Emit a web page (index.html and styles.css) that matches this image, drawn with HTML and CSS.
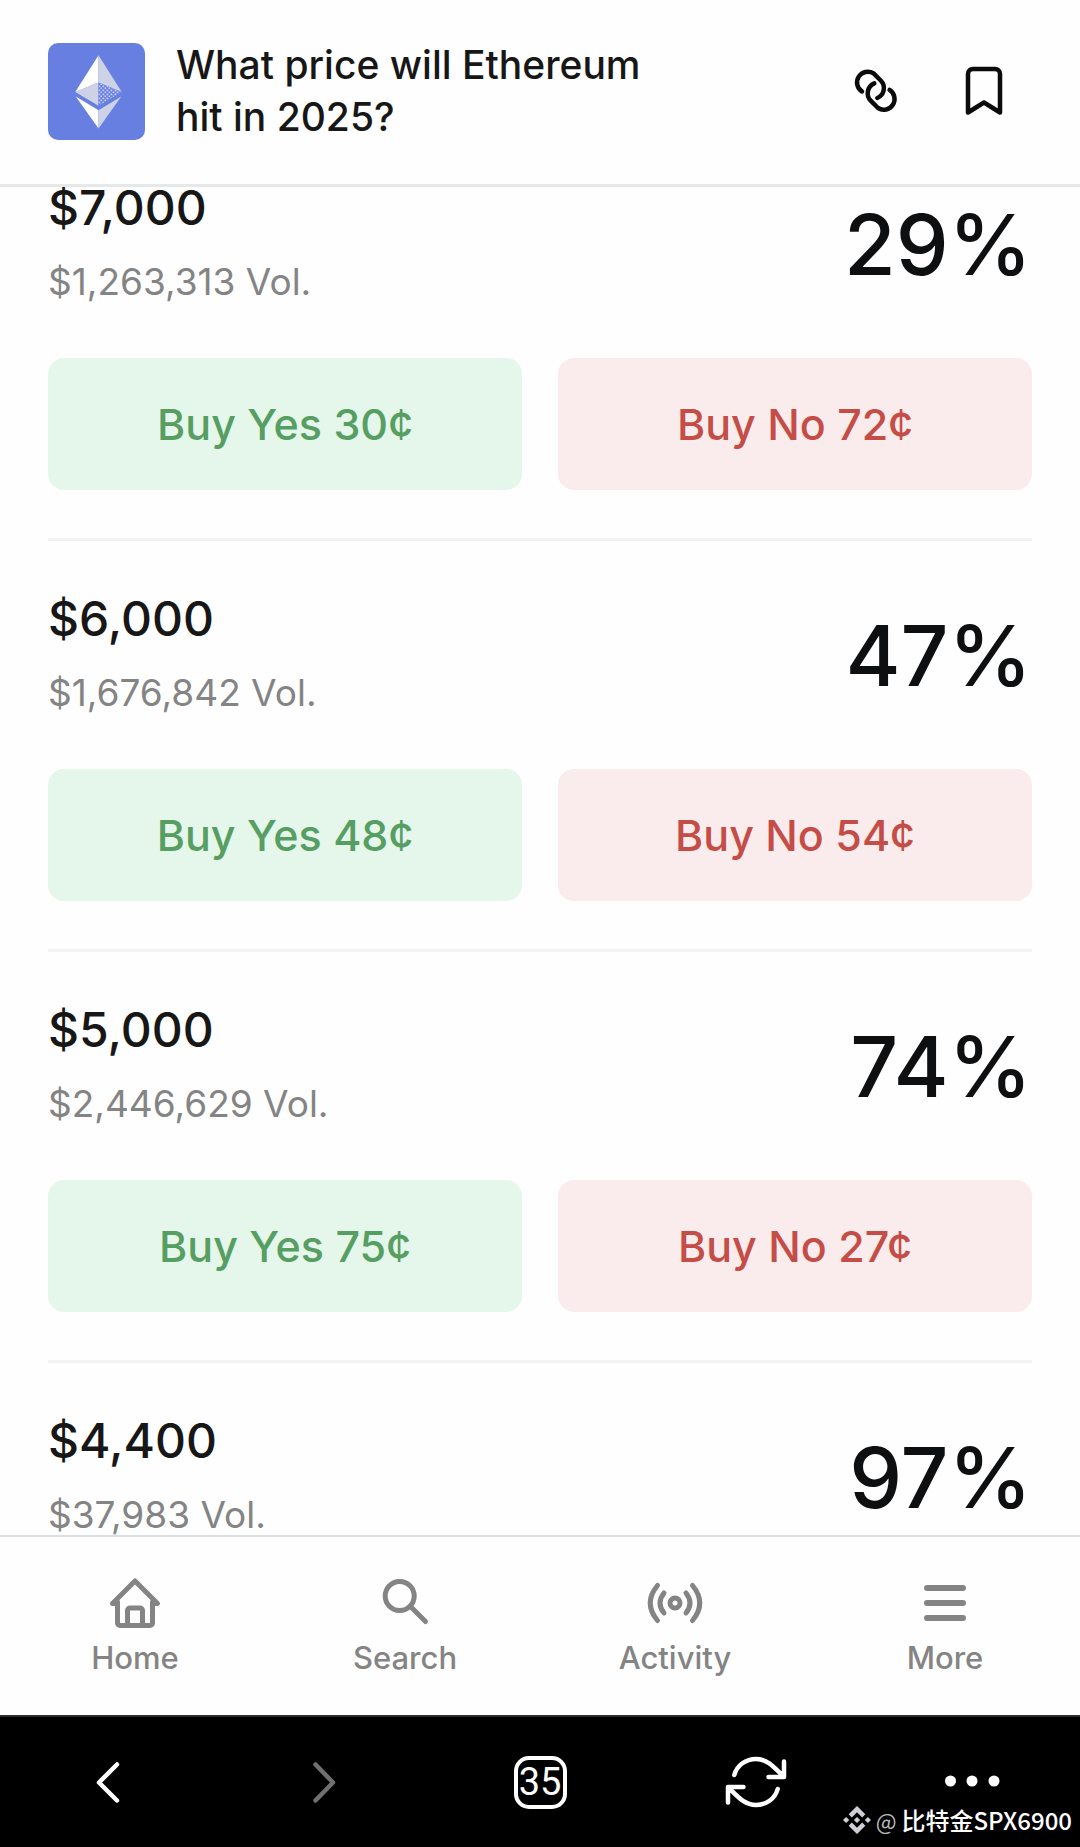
FILE: index.html
```html
<!DOCTYPE html>
<html lang="en">
<head>
<meta charset="utf-8">
<meta name="viewport" content="width=device-width, initial-scale=1">
<title>What price will Ethereum hit in 2025?</title>
<link rel="stylesheet" href="styles.css">
</head>
<body>
<header class="header">
  <svg class="coin" viewBox="0 0 96 96" aria-hidden="true">
    <defs>
      <pattern id="dots" width="4" height="4" patternUnits="userSpaceOnUse">
        <rect width="4" height="4" fill="#687fe2"/>
        <rect width="1.5" height="1.5" fill="#dfe3f6"/>
        <rect x="2" y="2" width="1.5" height="1.5" fill="#dfe3f6"/>
      </pattern>
    </defs>
    <rect width="96" height="96" rx="10" fill="#687fe2"/>
    <path d="M50 12 27 48.500 50 39Z" fill="#fff"/>
    <path d="M50 12 73 48.500 50 39Z" fill="#cdd2e7"/>
    <path d="M50 39 27 48.500 50 62Z" fill="#cdd2e7"/>
    <path d="M50 39 73 48.500 50 62Z" fill="url(#dots)"/>
    <path d="M27.500 53 50 66.500V84.500Z" fill="#fff"/>
    <path d="M72.500 53 50 66.500V84.500Z" fill="#cdd2e7"/>
  </svg>
  <h1 class="title">What price will Ethereum hit in 2025?</h1>
  <div class="actions">
    <button class="icon-button" type="button" aria-label="Copy link">
      <svg class="action-icon" viewBox="0 0 48 48"><path d="M10 24.500A10.700 10.700 0 1 1 21.600 6.400L28.700 13.500A10.700 10.700 0 0 1 25.300 31M37.600 22.900A10.700 10.700 0 1 1 26 41L18.900 33.900A10.700 10.700 0 0 1 22.300 16.400"/></svg>
    </button>
    <button class="icon-button" type="button" aria-label="Bookmark">
      <svg class="action-icon" viewBox="0 0 48 48"><path d="M8 45.500V7a5 5 0 0 1 5-5h22a5 5 0 0 1 5 5v38.500L24 35.500Z"/></svg>
    </button>
  </div>
</header>

<main class="content">
  <ul class="markets">
    <li class="market">
      <div class="summary">
        <div><h2 class="name">$7,000</h2><p class="volume">$1,263,313 Vol.</p></div>
        <span class="chance">29%</span>
      </div>
      <div class="trade"><button class="buy yes" type="button">Buy Yes 30¢</button><button class="buy no" type="button">Buy No 72¢</button></div>
    </li>
    <li class="market">
      <div class="summary">
        <div><h2 class="name">$6,000</h2><p class="volume">$1,676,842 Vol.</p></div>
        <span class="chance">47%</span>
      </div>
      <div class="trade"><button class="buy yes" type="button">Buy Yes 48¢</button><button class="buy no" type="button">Buy No 54¢</button></div>
    </li>
    <li class="market">
      <div class="summary">
        <div><h2 class="name">$5,000</h2><p class="volume">$2,446,629 Vol.</p></div>
        <span class="chance">74%</span>
      </div>
      <div class="trade"><button class="buy yes" type="button">Buy Yes 75¢</button><button class="buy no" type="button">Buy No 27¢</button></div>
    </li>
    <li class="market">
      <div class="summary">
        <div><h2 class="name">$4,400</h2><p class="volume">$37,983 Vol.</p></div>
        <span class="chance">97%</span>
      </div>
    </li>
  </ul>
</main>

<nav class="tabs">
  <a class="tab" href="#home">
    <svg class="tab-icon" viewBox="0 0 60 60"><path d="M12.500 30.500H7.500L30 8 52.500 30.500H47.500M12.500 29V50a2.500 2.500 0 0 0 2.500 2.500H45a2.500 2.500 0 0 0 2.500-2.500V29M22.500 52V37.500a2.500 2.500 0 0 1 2.500-2.500H35a2.500 2.500 0 0 1 2.500 2.500V52"/></svg>
    Home
  </a>
  <a class="tab" href="#search">
    <svg class="tab-icon" viewBox="0 0 60 60"><circle cx="24.700" cy="23" r="14.500"/><path d="M35.500 33.500 50.500 48.500"/></svg>
    Search
  </a>
  <a class="tab" href="#activity">
    <svg class="tab-icon" viewBox="0 0 60 60"><circle cx="30" cy="30" r="5"/><path d="M19 20Q11 30 19 40M41 20Q49 30 41 40M12.500 12.500Q-2 30 12.500 47.500M47.500 12.500Q62 30 47.500 47.500"/></svg>
    Activity
  </a>
  <a class="tab" href="#more">
    <svg class="tab-icon menu" viewBox="0 0 60 60"><path d="M12 15H48M12 30H48M12 45H48"/></svg>
    More
  </a>
</nav>

<footer class="browser">
  <button class="control" type="button" aria-label="Back"><svg class="control-icon" viewBox="0 0 60 60"><path d="M39 12.500 21 30.500 39 48.500"/></svg></button>
  <button class="control" type="button" aria-label="Forward" disabled><svg class="control-icon" viewBox="0 0 60 60"><path d="M21.500 12.500 39 30.500 21.500 48.500"/></svg></button>
  <button class="control" type="button" aria-label="35 open pages"><span class="count">35</span></button>
  <button class="control" type="button" aria-label="Reload"><svg class="control-icon" viewBox="0 0 60 60"><path d="M8.300 23C11 13 20 7 30 7C41 7 47 14 57 24M58 9.500V25H42.500M51.700 37C49 47 40 53 30 53C19 53 13 46 3 36M2 50.500V35H17.500"/></svg></button>
  <button class="control" type="button" aria-label="Menu"><svg class="control-icon dots" viewBox="0 0 60 60"><circle cx="8.500" cy="29" r="5.500"/><circle cx="30" cy="29" r="5.500"/><circle cx="52" cy="29" r="5.500"/></svg></button>
  <div class="credit">
    <svg class="credit-logo" viewBox="0 0 28 28" aria-hidden="true"><path d="M14 0 22.300 8.300 19.200 11.400 14 6.200 8.800 11.400 5.700 8.300ZM14 28 22.300 19.700 19.200 16.600 14 21.800 8.800 16.600 5.700 19.700ZM14 10.900 17.100 14 14 17.100 10.900 14ZM3.100 10.900 6.200 14 3.100 17.100 0 14ZM24.900 10.900 28 14 24.900 17.100 21.800 14Z"/></svg>
    <span class="credit-at">@</span>
    <span class="credit-name">比特金SPX6900</span>
  </div>
</footer>
</body>
</html>
```
FILE: styles.css
```css
* {
  box-sizing: border-box;
  margin: 0;
  padding: 0;
}

body {
  display: flex;
  flex-direction: column;
  height: 100vh;
  background: #fefefe;
  color: #171717;
  font-family: Inter, "Liberation Sans", sans-serif;
}

button {
  border: 0;
  background: none;
  color: inherit;
  font: inherit;
  cursor: pointer;
}

svg {
  display: block;
  overflow: visible;
  fill: none;
  stroke-linecap: round;
  stroke-linejoin: round;
}

.header {
  display: flex;
  align-items: center;
  gap: 31px;
  padding: 39px 48px 41px;
  border-bottom: 3px solid #e6e8e8;
}

.coin {
  flex: none;
  width: 97px;
  height: 97px;
}

.title {
  max-width: 500px;
  font-size: 39px;
  font-weight: 500;
  line-height: 52px;
}

.actions {
  display: flex;
  gap: 12px;
  margin-left: auto;
}

.icon-button {
  display: grid;
  place-items: center;
  width: 96px;
  height: 96px;
}

.action-icon {
  width: 48px;
  height: 48px;
  stroke: #0b0b0b;
  stroke-width: 4.5;
}

.content {
  flex: 1;
  min-height: 0;
  padding: 0 48px;
  overflow: hidden;
}

/* The first market is partly scrolled under the header. */
.markets {
  margin-top: -57px;
  list-style: none;
}

.market {
  padding: 48px 0;
  border-bottom: 3px solid #f2f2f2;
}

.summary {
  display: flex;
  align-items: center;
  justify-content: space-between;
  height: 132px;
}

.name {
  font-size: 48px;
  font-weight: 500;
  line-height: 60px;
}

.volume {
  margin-top: 16px;
  color: #848484;
  font-size: 37px;
  line-height: 56px;
}

.chance {
  color: #0e0f11;
  font-size: 84px;
  font-weight: 500;
}

.trade {
  display: grid;
  grid-template-columns: 1fr 1fr;
  gap: 36px;
  margin-top: 48px;
}

.buy {
  height: 132px;
  border-radius: 16px;
  font-size: 43px;
  font-weight: 500;
}

.yes {
  background: #e5f6eb;
  color: #579e62;
}

.no {
  background: #faecec;
  color: #c54d47;
}

.tabs {
  display: grid;
  grid-template-columns: repeat(4, 1fr);
  padding: 36px 0 39px;
  border-top: 2px solid #dcdfe6;
}

.tab {
  display: flex;
  flex-direction: column;
  align-items: center;
  gap: 7px;
  color: #848484;
  font-size: 31px;
  font-weight: 500;
  line-height: 36px;
  text-decoration: none;
}

.tab-icon {
  width: 60px;
  height: 60px;
  stroke: currentColor;
  stroke-width: 5;
}

.tab-icon.menu {
  stroke-width: 6;
}

.browser {
  position: relative;
  display: grid;
  grid-template-columns: repeat(5, 1fr);
  height: 132px;
  border-top: 2px solid #2c2c2e;
  background: #000;
  color: #fff;
}

.control {
  display: grid;
  place-items: center;
}

.control:disabled {
  color: #707070;
}

.control-icon {
  width: 60px;
  height: 60px;
  stroke: currentColor;
  stroke-width: 4.5;
}

.control-icon.dots {
  fill: currentColor;
  stroke: none;
}

.count {
  display: grid;
  place-items: center;
  width: 53px;
  height: 53px;
  border: 4px solid #fff;
  border-radius: 15px;
  font-family: Roboto, sans-serif;
  font-size: 38px;
  line-height: 44px;
}

/* Credit line laid over the browser bar. */
.credit {
  position: absolute;
  right: 8px;
  bottom: 9px;
  display: flex;
  align-items: center;
  gap: 5px;
  font-family: "Noto Sans CJK SC", sans-serif;
  font-size: 24px;
  line-height: 36px;
}

.credit-logo {
  width: 28px;
  height: 28px;
  fill: #cfcfd6;
}

.credit-at {
  color: #b9b9b9;
  font-size: 22px;
}

.credit-name {
  font-weight: 500;
}
```
